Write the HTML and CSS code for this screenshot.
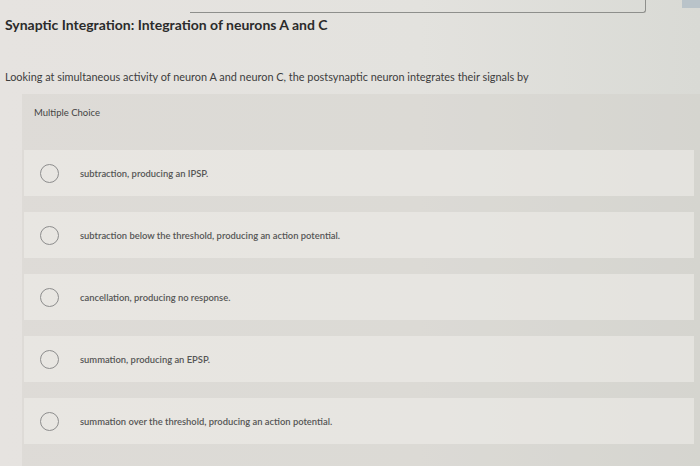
FILE: index.html
```html
<!DOCTYPE html>
<html lang="en">
<head>
<meta charset="utf-8">
<title>Synaptic Integration</title>
<link rel="stylesheet" href="styles.css">
</head>
<body>
<div class="topbar">
  <div class="topbox"></div>
  <div class="toptab"></div>
</div>
<h1 class="title">Synaptic Integration: Integration of neurons A and C</h1>
<p class="question">Looking at simultaneous activity of neuron A and neuron C, the postsynaptic neuron integrates their signals by</p>
<section class="panel">
  <div class="label">Multiple Choice</div>
  <ul class="options">
    <li class="option"><span class="radio"></span><span class="opt-text">subtraction, producing an IPSP.</span></li>
    <li class="option"><span class="radio"></span><span class="opt-text">subtraction below the threshold, producing an action potential.</span></li>
    <li class="option"><span class="radio"></span><span class="opt-text">cancellation, producing no response.</span></li>
    <li class="option"><span class="radio"></span><span class="opt-text">summation, producing an EPSP.</span></li>
    <li class="option"><span class="radio"></span><span class="opt-text">summation over the threshold, producing an action potential.</span></li>
  </ul>
</section>
</body>
</html>
```
FILE: styles.css
```css
html, body {
  margin: 0;
  padding: 0;
}
body {
  width: 700px;
  height: 466px;
  overflow: hidden;
  display: flex;
  flex-direction: column;
  background: linear-gradient(90deg, #e6e3e0 0%, #e3e2de 60%, #d9dad5 100%);
  font-family: "Lato", "Open Sans", sans-serif;
  color: #333;
}
.topbar {
  display: flex;
  align-items: flex-start;
  height: 14px;
  flex: none;
}
.topbox {
  margin-left: 190px;
  width: 455px;
  height: 12px;
  border-bottom: 1px solid #8e8f8c;
  border-right: 1px solid #8e8f8c;
  border-bottom-right-radius: 3px;
}
.toptab {
  margin-left: auto;
  width: 18px;
  height: 8px;
  background: #b9c3c9;
}
.title {
  margin: 2px 0 0 5px;
  font-size: 14px;
  line-height: 18px;
  font-weight: 700;
  color: #2b2b2b;
  flex: none;
}
.question {
  margin: 36px 0 0 5px;
  font-size: 10.9px;
  line-height: 14px;
  color: #3d3d3d;
  flex: none;
}
.panel {
  flex: 1;
  margin: 10px 0 0 22px;
  padding: 13px 0 0 2px;
  background: rgba(205, 203, 198, 0.35);
}
.label {
  margin-left: 10px;
  font-size: 9.5px;
  line-height: 12px;
  color: #444;
}
.options {
  list-style: none;
  margin: 31px 6px 0 0;
  padding: 0;
  display: flex;
  flex-direction: column;
  gap: 16px;
}
.option {
  display: flex;
  align-items: center;
  height: 46px;
  padding-left: 16px;
  background: rgba(240, 238, 235, 0.55);
}
.radio {
  width: 19px;
  height: 19px;
  border: 1px solid #8d8d8d;
  border-radius: 50%;
  box-sizing: border-box;
  flex: none;
}
.opt-text {
  margin-left: 21px;
  font-size: 9.4px;
  font-weight: 600;
  color: #555;
}
```
